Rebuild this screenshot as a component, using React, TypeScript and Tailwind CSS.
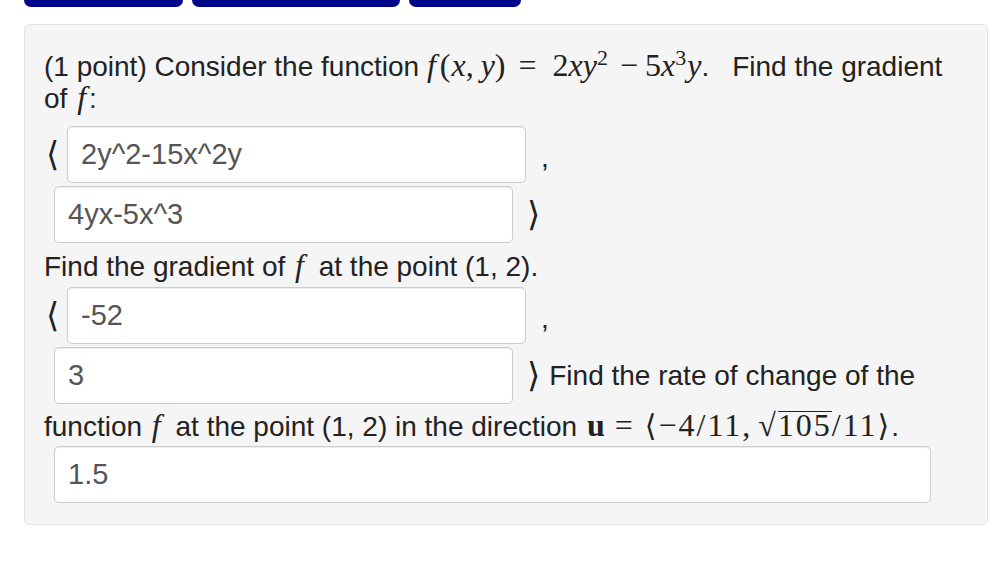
import React from "react";

const sans = "font-['Liberation_Sans','Helvetica',Arial,sans-serif]";
const serif = "font-['Liberation_Serif','Times_New_Roman',serif]";

function M({ children, className = "" }: { children: React.ReactNode; className?: string }) {
  return <span className={`${serif} text-[32px] leading-[31px] ${className}`}>{children}</span>;
}

function I({ children, className = "" }: { children: React.ReactNode; className?: string }) {
  return <span className={`italic ${className}`}>{children}</span>;
}

// standalone italic f as MathJax sets it
function F({ tight = false }: { tight?: boolean }) {
  return (
    <M>
      <I className={tight ? "ml-[2px] mr-[3px]" : "ml-[2px] mr-[7px]"}>f</I>
    </M>
  );
}

function Field({ value, wide = false, className = "" }: { value: string; wide?: boolean; className?: string }) {
  return (
    <div
      className={`h-[57px] ${wide ? "w-[877px]" : "w-[459px]"} shrink-0 bg-white border border-[#cccccc] rounded-[5px] flex items-center pl-[13px] text-[29px] text-[#555555] shadow-[inset_0_1px_1px_rgba(0,0,0,0.075)] ${className}`}
    >
      {value}
    </div>
  );
}

function Angle({ close = false }: { close?: boolean }) {
  return (
    <span className="font-['DejaVu_Serif',serif] text-[34px] font-light leading-none text-[#222]">
      {close ? "⟩" : "⟨"}
    </span>
  );
}

export default function App() {
  return (
    <div className={`w-[996px] h-[562px] bg-white ${sans} text-[#222222]`}>
      {/* nav buttons */}
      <div className="flex gap-[9px] pl-[24px]">
        <div className="w-[159px] h-[7px] bg-[#00058a] rounded-b-[7px]" />
        <div className="w-[208px] h-[7px] bg-[#00058a] rounded-b-[7px]" />
        <div className="w-[112px] h-[7px] bg-[#00058a] rounded-b-[7px]" />
      </div>

      {/* problem panel */}
      <div className="ml-[24px] mt-[17px] w-[964px] h-[501px] bg-[#f5f5f5] border border-[#e3e3e3] rounded-[5px] pt-[25px] pl-[19px] text-[28px] leading-[31px]">
        <p className="whitespace-nowrap">
          (1 point) Consider the function{" "}
          <M>
            <I className="mr-[4px]">f</I>(<I className="ml-[1px]">x</I>,<I className="ml-[7px]">y</I>)
            <span className="ml-[13px] mr-[16px]">=</span>2<I>xy</I>
            <sup className="text-[22px]">2</sup>
            <span className="ml-[12px] mr-[7px]">−</span>5<I>x</I>
            <sup className="text-[22px]">3</sup>
            <I className="ml-[1px]">y</I>
          </M>
          .<span className="ml-[23px]">Find the gradient</span>
          <br />
          of <F tight />:
        </p>

        <div className="mt-[12px] flex items-center">
          <span className="w-[23px] pl-[2px]"><Angle /></span>
          <Field value="2y^2-15x^2y" />
          <span className="ml-[15px] mt-[6px]">,</span>
        </div>
        <div className="mt-[3px] flex items-center">
          <Field value="4yx-5x^3" className="ml-[10px]" />
          <span className="ml-[14px]"><Angle close /></span>
        </div>

        <p className="mt-[7px] whitespace-nowrap">
          Find the gradient of <F /> at the point (1, 2).
        </p>

        <div className="mt-[5px] flex items-center">
          <span className="w-[23px] pl-[2px]"><Angle /></span>
          <Field value="-52" />
          <span className="ml-[15px] mt-[6px]">,</span>
        </div>
        <div className="mt-[3px] flex items-center">
          <Field value="3" className="ml-[10px]" />
          <span className="ml-[14px]"><Angle close /></span>
          <span className="ml-[9px] whitespace-nowrap">Find the rate of change of the</span>
        </div>

        <p className="mt-[6px] whitespace-nowrap">
          function <F /> at the point (1, 2) in the direction{" "}
          <M className="tracking-[2px]">
            <b className="ml-[2px]">u</b>
            <span className="ml-[8px] mr-[10px]">=</span>
            <span className="font-['DejaVu_Serif',serif] text-[30px]">⟨</span>−4/11,
            <span className="ml-[6px]">√</span>
            <span className="border-t-[1.5px] border-[#222] leading-[27px] inline-block">105</span>/11
            <span className="font-['DejaVu_Serif',serif] text-[30px]">⟩</span>
          </M>
          .
        </p>

        <div className="mt-[4px] flex">
          <Field value="1.5" wide className="ml-[10px]" />
        </div>
      </div>
    </div>
  );
}
